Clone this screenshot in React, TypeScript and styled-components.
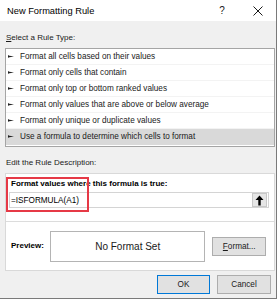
import React from "react";
import styled, { createGlobalStyle } from "styled-components";

const GlobalStyle = createGlobalStyle`
  html, body {
    margin: 0;
    padding: 0;
    background: #ffffff;
  }
  body {
    font-family: "Liberation Sans", Arial, sans-serif;
    color: #000000;
  }
  * {
    box-sizing: border-box;
  }
`;

const ruleTypes = [
  "Format all cells based on their values",
  "Format only cells that contain",
  "Format only top or bottom ranked values",
  "Format only values that are above or below average",
  "Format only unique or duplicate values",
  "Use a formula to determine which cells to format",
];

const App = () => {
  return (
    <>
      <GlobalStyle />
      <Dialog>
        <TitleBar>
          <Title>New Formatting Rule</Title>
          <CaptionButton>?</CaptionButton>
          <CaptionButton>
            <svg width="10" height="10" viewBox="0 0 10 10">
              <path d="M0.5 0.5 L9.5 9.5 M9.5 0.5 L0.5 9.5" stroke="#1a1a1a" strokeWidth="1" />
            </svg>
          </CaptionButton>
        </TitleBar>
        <Body>
          <SectionLabel $top={12}>
            <u>S</u>elect a Rule Type:
          </SectionLabel>
          <ListBox>
            {ruleTypes.map((rule, i) => (
              <ListRow key={rule} $selected={i === ruleTypes.length - 1}>
                <svg width="6" height="5" viewBox="0 0 6 5">
                  <path d="M0 1.6 L6 2.5 L0 3.4 Z M0 1 L2.5 2.5 L0 4 Z" fill="#222" />
                </svg>
                <span>{rule}</span>
              </ListRow>
            ))}
          </ListBox>
          <SectionLabel $top={11}>Edit the Rule Description:</SectionLabel>
          <DescriptionBox>
            <FormulaArea>
              <BoldLabel>Format values where this formula is true:</BoldLabel>
              <FormulaInput>
                <FormulaText>=ISFORMULA(A1)</FormulaText>
                <CollapseButton>
                  <svg width="9" height="11" viewBox="0 0 9 11">
                    <path d="M4.5 0.5 L8.5 5 L5.7 5 L5.7 10.5 L3.3 10.5 L3.3 5 L0.5 5 Z" fill="#000" />
                  </svg>
                </CollapseButton>
              </FormulaInput>
            </FormulaArea>
            <PreviewRow>
              <BoldLabel>Preview:</BoldLabel>
              <PreviewBox>No Format Set</PreviewBox>
              <DialogButton $width={54}>
                <u>F</u>ormat...
              </DialogButton>
            </PreviewRow>
            <Highlight />
          </DescriptionBox>
          <Footer>
            <DialogButton $width={53} $default>
              OK
            </DialogButton>
            <DialogButton $width={54}>Cancel</DialogButton>
          </Footer>
        </Body>
      </Dialog>
    </>
  );
};

export default App;

const Dialog = styled.div`
  width: 277px;
  height: 299px;
  display: flex;
  flex-direction: column;
  background: #f0f0f0;
  border-right: 1px solid #7a7a7a;
  border-bottom: 1px solid #7a7a7a;
`;

const TitleBar = styled.div`
  height: 21px;
  display: flex;
  align-items: center;
  background: #ffffff;
  padding-left: 7px;
`;

const Title = styled.div`
  flex: 1;
  font-size: 9.3px;
  color: #000000;
`;

const CaptionButton = styled.div`
  width: 36px;
  height: 21px;
  display: flex;
  align-items: center;
  justify-content: center;
  font-size: 10px;
  color: #1a1a1a;
`;

const Body = styled.div`
  flex: 1;
  display: flex;
  flex-direction: column;
  padding: 0 1px 0 5px;
`;

const SectionLabel = styled.div<{ $top: number }>`
  margin-top: ${(p) => p.$top}px;
  margin-bottom: 5px;
  padding-left: 1px;
  font-size: 8px;
  line-height: 10px;
  color: #1a1a1a;
`;

const ListBox = styled.div`
  width: 270px;
  height: 99px;
  background: #ffffff;
  border: 1px solid #a5a5a5;
  display: flex;
  flex-direction: column;
`;

const ListRow = styled.div<{ $selected?: boolean }>`
  height: 16px;
  display: flex;
  align-items: center;
  gap: 6px;
  padding-left: 2px;
  font-size: 8.2px;
  color: #1a1a1a;
  background: ${(p) => (p.$selected ? "#d9d9d9" : "#ffffff")};
  border-bottom: 1px solid ${(p) => (p.$selected ? "#d9d9d9" : "#f3f3f3")};
`;

const DescriptionBox = styled.div`
  position: relative;
  width: 270px;
  height: 98px;
  background: #ffffff;
  border: 1px solid #d9d9d9;
  display: flex;
  flex-direction: column;
`;

const FormulaArea = styled.div`
  display: flex;
  flex-direction: column;
  padding: 5px 5px 13px 3px;
  border-bottom: 1px solid #dcdcdc;
`;

const BoldLabel = styled.div`
  padding-left: 2px;
  font-size: 8px;
  line-height: 10px;
  font-weight: bold;
  color: #000000;
`;

const FormulaInput = styled.div`
  margin-top: 3px;
  height: 16px;
  display: flex;
  align-items: center;
  justify-content: space-between;
  border: 1px solid #d4d4d4;
  padding: 0 1px 0 1px;
`;

const FormulaText = styled.span`
  font-size: 8.2px;
  color: #000000;
`;

const CollapseButton = styled.div`
  width: 15px;
  height: 14px;
  display: flex;
  align-items: center;
  justify-content: center;
  background: #e6e6e6;
  border: 1px solid #c8c8c8;
`;

const PreviewRow = styled.div`
  flex: 1;
  display: flex;
  align-items: center;
  padding: 0 8px 0 3px;
`;

const PreviewBox = styled.div`
  width: 157px;
  height: 31px;
  margin-left: 6px;
  display: flex;
  align-items: center;
  justify-content: center;
  border: 1px solid #b4b4b4;
  background: #ffffff;
  font-size: 10px;
  color: #1a1a1a;
`;

const DialogButton = styled.div<{ $width: number; $default?: boolean }>`
  width: ${(p) => p.$width}px;
  height: 19px;
  margin-left: 7px;
  display: flex;
  align-items: center;
  justify-content: center;
  font-size: 8.2px;
  color: #1a1a1a;
  background: #e1e1e1;
  border: 1px solid ${(p) => (p.$default ? "#0078d7" : "#adadad")};
`;

const Footer = styled.div`
  display: flex;
  justify-content: flex-end;
  margin-top: 4px;
  padding-right: 4px;
`;

const Highlight = styled.div`
  position: absolute;
  left: 0;
  top: 3px;
  width: 83px;
  height: 35px;
  border: 2px solid #e63946;
  pointer-events: none;
`;
